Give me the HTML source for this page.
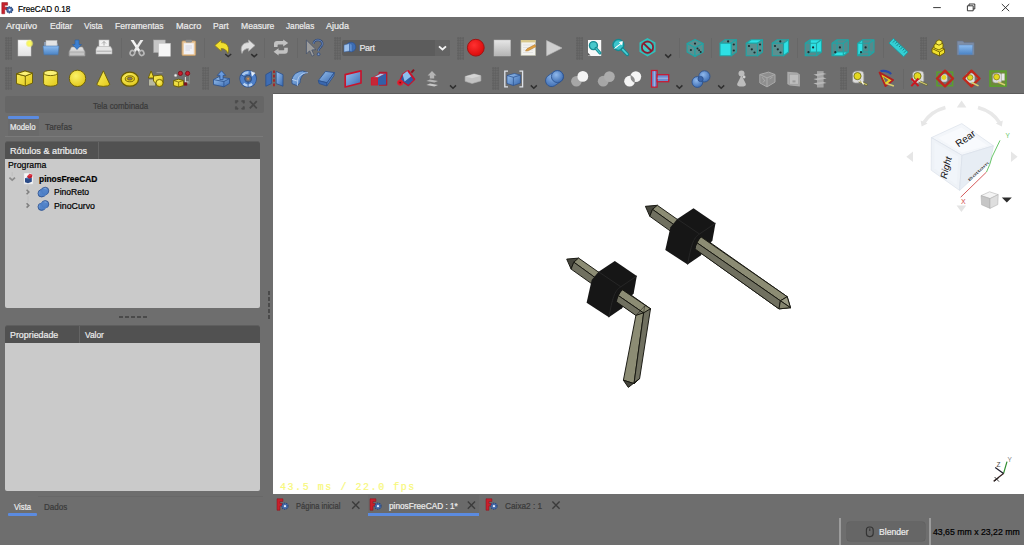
<!DOCTYPE html>
<html><head><meta charset="utf-8"><title>FreeCAD 0.18</title>
<style>
html,body{margin:0;padding:0}
body{width:1024px;height:545px;position:relative;overflow:hidden;background:#6e6e6e;font-family:"Liberation Sans",sans-serif;font-size:9px;color:#e6e6e6}
.a{position:absolute}
.t{position:absolute;white-space:nowrap;line-height:12px;z-index:5;transform-origin:0 0;-webkit-text-stroke:0.22px}
.lt{background:#cacaca}
.hd{background:#515151}
.sep{position:absolute;width:1px;height:20px;background:#676767}
.grip{position:absolute;width:7px;height:23px;background-image:radial-gradient(circle at 1.2px 1.2px,#606060 0.8px,rgba(96,96,96,0) 1.3px);background-size:2.5px 2.5px}
svg{position:absolute;left:0;top:0;overflow:visible}
</style></head><body>
<div class="a" style="left:0;top:0;width:1024px;height:17px;background:#fff"></div>
<div class="t" style="left:17.6px;top:2.6px;font-size:9.8px;transform:scaleX(0.836);color:#000">FreeCAD 0.18</div>
<div class="t" style="left:6.2px;top:20.1px;font-size:9.5px;transform:scaleX(0.966);color:#ececec">Arquivo</div>
<div class="t" style="left:49.6px;top:20.1px;font-size:9.5px;transform:scaleX(0.903);color:#ececec">Editar</div>
<div class="t" style="left:84.0px;top:20.1px;font-size:9.5px;transform:scaleX(0.883);color:#ececec">Vista</div>
<div class="t" style="left:114.8px;top:20.1px;font-size:9.5px;transform:scaleX(0.902);color:#ececec">Ferramentas</div>
<div class="t" style="left:175.6px;top:20.1px;font-size:9.5px;transform:scaleX(0.962);color:#ececec">Macro</div>
<div class="t" style="left:213.1px;top:20.1px;font-size:9.5px;transform:scaleX(0.901);color:#ececec">Part</div>
<div class="t" style="left:241.0px;top:20.1px;font-size:9.5px;transform:scaleX(0.901);color:#ececec">Measure</div>
<div class="t" style="left:286.0px;top:20.1px;font-size:9.5px;transform:scaleX(0.864);color:#ececec">Janelas</div>
<div class="t" style="left:326.0px;top:20.1px;font-size:9.5px;transform:scaleX(0.947);color:#ececec">Ajuda</div>
<div class="t" style="left:93.3px;top:99.8px;font-size:8.8px;transform:scaleX(0.896);color:#3a3a3a">Tela combinada</div>
<div class="t" style="left:9.6px;top:121.2px;font-size:8.8px;transform:scaleX(0.883);color:#ececec">Modelo</div>
<div class="t" style="left:44.8px;top:121.2px;font-size:8.8px;transform:scaleX(0.942);color:#3a3a3a">Tarefas</div>
<div class="t" style="left:9.9px;top:145.0px;font-size:9.5px;transform:scaleX(0.960);color:#ececec">Rótulos &amp; atributos</div>
<div class="t" style="left:7.8px;top:159.3px;font-size:9.5px;transform:scaleX(0.918);color:#000">Programa</div>
<div class="t" style="left:38.7px;top:173.0px;font-size:9.5px;transform:scaleX(0.884);color:#000;font-weight:bold">pinosFreeCAD</div>
<div class="t" style="left:54.4px;top:186.2px;font-size:9.5px;transform:scaleX(0.898);color:#000">PinoReto</div>
<div class="t" style="left:54.4px;top:199.6px;font-size:9.5px;transform:scaleX(0.924);color:#000">PinoCurvo</div>
<div class="t" style="left:9.8px;top:328.7px;font-size:9.5px;transform:scaleX(0.933);color:#ececec">Propriedade</div>
<div class="t" style="left:85.0px;top:328.7px;font-size:9.5px;transform:scaleX(0.880);color:#ececec">Valor</div>
<div class="t" style="left:14.0px;top:501.3px;font-size:8.8px;transform:scaleX(0.886);color:#ececec">Vista</div>
<div class="t" style="left:44.0px;top:501.3px;font-size:8.8px;transform:scaleX(0.916);color:#3a3a3a">Dados</div>
<div class="t" style="left:296.2px;top:500.2px;font-size:8.8px;transform:scaleX(0.856);color:#3a3a3a">Página inicial</div>
<div class="t" style="left:389.0px;top:500.2px;font-size:8.8px;transform:scaleX(0.938);color:#ececec">pinosFreeCAD : 1*</div>
<div class="t" style="left:505.0px;top:500.2px;font-size:8.8px;transform:scaleX(0.939);color:#3a3a3a">Caixa2 : 1</div>
<div class="t" style="left:878.9px;top:525.8px;font-size:9.5px;transform:scaleX(0.907);color:#ececec">Blender</div>
<div class="t" style="left:933.3px;top:525.7px;font-size:9.5px;transform:scaleX(0.917);color:#000">43,65 mm x 23,22 mm</div>
<!-- 3D view background -->
<div class="a" style="left:273px;top:94px;width:751px;height:400px;background:#fff"></div>
<div class="a" style="left:273px;top:93px;width:751px;height:1px;background:#5c5c5c"></div>
<!-- combo view dock title -->
<div class="a" style="left:5px;top:96px;width:259px;height:17px;background:#666666;border-radius:2px"></div>
<!-- tab bar top -->
<div class="a" style="left:5px;top:136px;width:258px;height:1px;background:#7a7a7a"></div>
<div class="a" style="left:8px;top:116px;width:31px;height:3px;background:#5b8be0;border-radius:1px"></div>
<div class="a" style="left:8px;top:119px;width:31px;height:17px;background:#6a6a6a"></div>
<!-- tree -->
<div class="a hd" style="left:5px;top:141px;width:255px;height:18px;border-radius:3px 3px 0 0;border-top:1px solid #5e5e5e;box-sizing:border-box"></div>
<div class="a" style="left:98px;top:142px;width:1px;height:17px;background:#646464"></div>
<div class="a lt" style="left:5px;top:159px;width:255px;height:149px;border-radius:0 0 2px 2px"></div>
<!-- splitter handles -->
<div class="a" style="left:119px;top:316px;width:29px;height:2px;background:repeating-linear-gradient(90deg,#4a4a4a 0 4px,rgba(0,0,0,0) 4px 6px)"></div>
<div class="a" style="left:268px;top:291px;width:2px;height:29px;background:repeating-linear-gradient(180deg,#4a4a4a 0 4px,rgba(0,0,0,0) 4px 6px)"></div>
<!-- property -->
<div class="a hd" style="left:5px;top:325px;width:255px;height:18px;border-radius:3px 3px 0 0;border-top:1px solid #5e5e5e;box-sizing:border-box"></div>
<div class="a" style="left:79px;top:326px;width:1px;height:17px;background:#646464"></div>
<div class="a lt" style="left:5px;top:343px;width:255px;height:148px;border-radius:0 0 2px 2px"></div>
<div class="a" style="left:8px;top:513px;width:29px;height:3px;background:#5b8be0;border-radius:1px"></div>
<div class="a" style="left:38px;top:496px;width:225px;height:1px;background:#686868"></div>
<!-- mdi tabs -->
<div class="a" style="left:368px;top:495px;width:111px;height:18px;background:#6a6a6a"></div>
<div class="a" style="left:368px;top:513px;width:111px;height:3px;background:#5b8be0"></div>
<!-- status bar -->
<div class="a" style="left:839px;top:518px;width:2px;height:27px;background:#9c9c9c"></div>
<div class="a" style="left:929px;top:518px;width:2px;height:27px;background:#9c9c9c"></div>
<div class="a" style="left:847px;top:522px;width:78px;height:19px;background:#666;border-radius:3px;box-shadow:0 0 0 0.5px #5e5e5e"></div>
<div class="t" style="left:280px;top:481.5px;color:#f8f87c;font-family:'Liberation Mono',monospace;font-size:10px;letter-spacing:1.55px">43.5 ms / 22.0 fps</div>
<!-- toolbar 1 -->
<div class="grip" style="left:5px;top:37px"></div>
<div class="sep" style="left:121px;top:38px"></div>
<div class="sep" style="left:204px;top:38px"></div>
<div class="sep" style="left:264px;top:38px"></div>
<div class="sep" style="left:297px;top:38px"></div>
<div class="grip" style="left:334px;top:37px"></div>
<div class="grip" style="left:457px;top:37px"></div>
<div class="grip" style="left:576px;top:37px"></div>
<div class="sep" style="left:679px;top:38px"></div>
<div class="sep" style="left:711px;top:38px"></div>
<div class="sep" style="left:797px;top:38px"></div>
<div class="sep" style="left:883px;top:38px"></div>
<div class="grip" style="left:920px;top:37px"></div>
<!-- workbench combobox -->
<div class="a" style="left:342px;top:40px;width:108px;height:16px;background:#5c5c5c;border-radius:2px"></div>
<div class="a" style="left:435px;top:40px;width:15px;height:16px;background:#636363;border-radius:0 2px 2px 0"></div>
<div class="t" style="left:359.4px;top:42.2px;font-size:9px;letter-spacing:-0.3px">Part</div>
<svg width="1024" height="66" viewBox="0 0 1024 66">
<defs>
<linearGradient id="gPage" x1="0" y1="0" x2="0" y2="1"><stop offset="0" stop-color="#fdfdfd"/><stop offset="1" stop-color="#e2e2e2"/></linearGradient>
<linearGradient id="gBlue" x1="0" y1="0" x2="0" y2="1"><stop offset="0" stop-color="#8dbcf0"/><stop offset="1" stop-color="#4a83c4"/></linearGradient>
<linearGradient id="gGray" x1="0" y1="0" x2="0" y2="1"><stop offset="0" stop-color="#e6e6e6"/><stop offset="1" stop-color="#b4b4b4"/></linearGradient>
<radialGradient id="gGlow"><stop offset="0" stop-color="#ffff50"/><stop offset="0.6" stop-color="#f4f060" stop-opacity="0.9"/><stop offset="1" stop-color="#f0f060" stop-opacity="0"/></radialGradient>
<radialGradient id="gRed" cx="0.4" cy="0.35" r="0.7"><stop offset="0" stop-color="#ff3030"/><stop offset="1" stop-color="#d80808"/></radialGradient>
<linearGradient id="gCube" x1="0" y1="0" x2="1" y2="1"><stop offset="0" stop-color="#8ab4e8"/><stop offset="1" stop-color="#3a6cb0"/></linearGradient>
</defs>
<!-- new -->
<g transform="translate(17,39)"><rect x="1" y="1" width="13" height="16" fill="url(#gPage)" stroke="#c8c8c8" stroke-width="0.5"/><circle cx="12.5" cy="4.5" r="4.2" fill="url(#gGlow)"/></g>
<!-- open -->
<g transform="translate(42,39)"><path d="M2,3 L7,3 L8,4.5 L16,4.5 L16,15 L2,15 Z" fill="#8a9ab0"/><rect x="4" y="1.5" width="11" height="7" fill="#e4e4e4" stroke="#bdbdbd" stroke-width="0.5"/><path d="M1,7 L17,7 L16,15.8 L2,15.8 Z" fill="url(#gBlue)" stroke="#4a78b0" stroke-width="0.6"/></g>
<!-- save -->
<g transform="translate(68,39)"><path d="M3.5,8 L14.5,8 L17,13 L17,17 L1,17 L1,13 Z" fill="url(#gGray)" stroke="#9a9a9a" stroke-width="0.6"/><rect x="1.3" y="13" width="15.4" height="3.8" fill="#c4c4c4" stroke="#8e8e8e" stroke-width="0.5"/><path d="M7,1 L11,1 L11,5.5 L13.5,5.5 L9,10.5 L4.5,5.5 L7,5.5 Z" fill="#3c7fd0" stroke="#2a5ea0" stroke-width="0.6"/></g>
<!-- print -->
<g transform="translate(95,39)"><rect x="4" y="1" width="10" height="8" fill="#f2f2f2" stroke="#b8b8b8" stroke-width="0.6"/><path d="M7,4.5 L9,2.5 L11,4.5 M9,2.5 L9,6.5" stroke="#9a9a9a" stroke-width="0.8" fill="none"/><path d="M2.5,7.5 L15.5,7.5 L17,10 L17,15 L1,15 L1,10 Z" fill="#e6e6e6" stroke="#b0b0b0" stroke-width="0.6"/><rect x="1.5" y="11.5" width="15" height="1.6" fill="#bcbcbc"/></g>
<!-- cut -->
<g transform="translate(128,39)"><path d="M2.6,1 L5.6,1 L12.4,11.6 L10.4,13 Z" fill="#f6f6f6"/><path d="M15.4,1 L12.4,1 L5.6,11.6 L7.6,13 Z" fill="#ececec"/><ellipse cx="4.4" cy="14" rx="2.3" ry="2.5" fill="none" stroke="#b8b8b8" stroke-width="1.7" transform="rotate(25 4.4 14)"/><ellipse cx="13.6" cy="14" rx="2.3" ry="2.5" fill="none" stroke="#b8b8b8" stroke-width="1.7" transform="rotate(-25 13.6 14)"/></g>
<!-- copy -->
<g transform="translate(153,39)"><rect x="0.7" y="1" width="11.5" height="12.5" fill="#c6c6c6" stroke="#aaa" stroke-width="0.5"/><rect x="5.7" y="4.3" width="11.8" height="13" fill="#f6f6f6" stroke="#c4c4c4" stroke-width="0.5"/></g>
<!-- paste -->
<g transform="translate(181,39)"><rect x="1" y="2" width="13.6" height="14.4" rx="1" fill="#e8c79c" stroke="#c79a62" stroke-width="0.8"/><rect x="2.8" y="4.2" width="10" height="11" fill="#f1f1f5"/><rect x="4.6" y="0.8" width="6.4" height="2.6" rx="0.8" fill="#8a8a8a"/><path d="M4.5,7 H11 M4.5,9 H11 M4.5,11 H9" stroke="#c8c8d8" stroke-width="0.7"/></g>
<!-- undo -->
<g transform="translate(214,39)"><path d="M0.8,6.4 L7.2,1 L7.2,3.6 C13.4,3.6 16,8.4 13.8,14.4 C12.6,11 10.6,9.6 7.2,9.6 L7.2,12.2 Z" fill="#f2e02e" stroke="#8c7c12" stroke-width="0.8" stroke-linejoin="round"/><path d="M11.2,15 L14.2,17.5 L17.2,15" fill="none" stroke="#2e2e2e" stroke-width="1.5"/></g>
<!-- redo -->
<g transform="translate(241,39)"><path d="M14,6.4 L7.6,1 L7.6,3.6 C1.4,3.6 -1.2,8.4 1,14.4 C2.2,11 4.2,9.6 7.6,9.6 L7.6,12.2 Z" fill="#dedede" stroke="#ababab" stroke-width="0.8" stroke-linejoin="round"/><path d="M10.2,15.2 L13.2,17.7 L16.2,15.2" fill="none" stroke="#2e2e2e" stroke-width="1.5"/></g>
<!-- refresh -->
<g transform="translate(272.6,39.4)" fill="#c2c2c2"><path d="M1.4,7.6 L1.4,4.6 Q1.4,1.6 4.4,1.6 L10.6,1.6 L10.6,0 L15.6,3.6 L10.6,7.2 L10.6,5.2 L5.6,5.2 Q5,5.2 5,6 L5,7.6 Z"/><path d="M15.2,8.4 L15.2,11.4 Q15.2,14.4 12.2,14.4 L6,14.4 L6,16 L1,12.4 L6,8.8 L6,10.8 L11,10.8 Q11.6,10.8 11.6,10 L11.6,8.4 Z"/></g>
<!-- whats this -->
<g transform="translate(305,39)"><path d="M1.4,1 L1.4,15 L4.6,11.8 L7,17.2 L9.2,16.2 L6.8,11 L11,10.6 Z" fill="#9c9c9c" stroke="#48546c" stroke-width="0.8" stroke-linejoin="round"/><path d="M8.6,4.6 C8.8,1.4 11.8,0.6 14.2,1.2 C17.6,2 18.2,5.4 16.2,7.4 C14.6,9 13.6,9.6 13.6,11.8" fill="none" stroke="#2f4878" stroke-width="2.3"/><path d="M8.6,4.6 C8.8,1.4 11.8,0.6 14.2,1.2 C17.6,2 18.2,5.4 16.2,7.4 C14.6,9 13.6,9.6 13.6,11.8" fill="none" stroke="#7896c4" stroke-width="0.9"/><circle cx="13.6" cy="15.2" r="1.4" fill="#7896c4" stroke="#2f4878" stroke-width="0.8"/></g>
<!-- combobox icon + arrow -->
<g transform="translate(343,42)"><circle cx="8" cy="5" r="4.8" fill="#3d6db4" stroke="#2d4f88" stroke-width="0.6"/><path d="M1,3 L6.5,1.5 L6.5,9 L1,10 Z" fill="#9cc0ec" stroke="#3a62a0" stroke-width="0.5"/><path d="M6.5,1.5 L9,2.4 L9,9.6 L6.5,9 Z" fill="#5e8fd0" stroke="#3a62a0" stroke-width="0.5"/></g>
<path d="M439,46.3 L442.5,49.5 L446,46.3" fill="none" stroke="#f4f4f4" stroke-width="1.8"/>
<!-- macro record / stop / edit / run -->
<circle cx="475.8" cy="47.7" r="8.4" fill="url(#gRed)" stroke="#a01414" stroke-width="1"/>
<rect x="494" y="40" width="16.6" height="16" fill="url(#gGray)" stroke="#b8b8b8" stroke-width="0.5"/>
<g transform="translate(520,39)"><rect x="1" y="1.5" width="14.5" height="15" fill="#f3f3ef" stroke="#b9b9a8" stroke-width="0.7"/><rect x="1" y="1" width="14.5" height="2.4" fill="#d9c98c"/><path d="M3,6 H13 M3,8.5 H13 M3,11 H13 M3,13.5 H13" stroke="#d6d6d6" stroke-width="0.6"/><path d="M5.5,12 L7,9.8 L14.8,5.6 L16,7.6 L8.2,11.8 Z" fill="#e0a040" stroke="#a8702a" stroke-width="0.5"/></g>
<path d="M546.6,40.6 L562,48 L546.6,55.8 Z" fill="#cfcfcf" stroke="#bcbcbc" stroke-width="0.6"/>
<!-- fit all -->
<g transform="translate(587,39)"><rect x="1" y="1" width="13.2" height="16" fill="#f8f8f8"/><circle cx="6.4" cy="6.6" r="4" fill="#48c8cc" stroke="#188c94" stroke-width="1.4"/><path d="M9,9.4 L13,14" stroke="#188c94" stroke-width="3" stroke-linecap="round"/><path d="M9.2,9.6 L12.8,13.8" stroke="#48c8cc" stroke-width="1.2" stroke-linecap="round"/><path d="M0.8,13.6 L3.6,16.6 L0.8,16.6Z" fill="#555"/></g>
<!-- fit selection -->
<g transform="translate(611,38)"><circle cx="7.4" cy="7" r="5.4" fill="#3cc4cc" stroke="#148a92" stroke-width="1.5"/><path d="M11.4,11.2 L16.4,16.4" stroke="#148a92" stroke-width="3.6" stroke-linecap="round"/><path d="M11.8,11.6 L16.2,16.2" stroke="#4cd0d6" stroke-width="1.6" stroke-linecap="round"/><path d="M3.6,10.4 L9.6,5.6 L8.4,4.4 L11.4,3.6 L10.8,6.8 L9.8,5.9 Z" fill="#fff" stroke="#fff" stroke-width="0.8"/></g>
<!-- draw style -->
<g transform="translate(639,38)"><path d="M8.5,0.8 L15.8,5 L15.8,13.4 L8.5,17.6 L1.2,13.4 L1.2,5 Z" fill="#5a8c8c" stroke="#2cc4c0" stroke-width="1.4"/><circle cx="8.5" cy="9.2" r="5.6" fill="#46c8c4" stroke="#8a1c30" stroke-width="1.7"/><path d="M4.6,5.4 L12.4,13" stroke="#8a1c30" stroke-width="2"/></g>
<path d="M665.2,54.4 L668.2,57.4 L671.2,54.4" fill="none" stroke="#2e2e2e" stroke-width="1.5"/>
<!-- view cubes -->
<g transform="translate(686.5,39)" stroke="#1fa5a5" stroke-width="1.1" stroke-linejoin="round"><polygon points="8.5,0.6 16.6,4.6 8.5,8.8 0.6,4.6" fill="#5c9090"/><polygon points="0.6,4.6 8.5,8.8 8.5,17.4 0.6,13" fill="#5c9090"/><polygon points="16.6,4.6 8.5,8.8 8.5,17.4 16.6,13" fill="#5c9090"/><g fill="#1c2c30" stroke="none"><circle cx="8.5" cy="4.6" r="1.1"/><circle cx="4.4" cy="11" r="1.1"/><circle cx="11" cy="9.5" r="1"/><circle cx="14.2" cy="13" r="1"/><circle cx="12.6" cy="11.2" r="1"/></g></g>
<g transform="translate(719.3,39)" stroke="#1fa5a5" stroke-width="1.1" stroke-linejoin="round"><polygon points="0.7,4.2 12,4.2 17,0.7 5.7,0.7" fill="#5c9090"/><polygon points="0.7,4.2 12,4.2 12,16.8 0.7,16.8" fill="#2ee0e4"/><polygon points="12,4.2 17,0.7 17,13 12,16.8" fill="#5c9090"/><circle cx="8.8" cy="2.4" r="1.1" fill="#1c2c30" stroke="none"/><circle cx="14.5" cy="5.5" r="1.1" fill="#1c2c30" stroke="none"/><circle cx="14.5" cy="11.5" r="1.1" fill="#1c2c30" stroke="none"/></g>
<g transform="translate(745.5,39)" stroke="#1fa5a5" stroke-width="1.1" stroke-linejoin="round"><polygon points="0.7,4.2 12,4.2 17,0.7 5.7,0.7" fill="#2ee0e4"/><polygon points="0.7,4.2 12,4.2 12,16.8 0.7,16.8" fill="#5c9090"/><polygon points="12,4.2 17,0.7 17,13 12,16.8" fill="#5c9090"/><circle cx="3.5" cy="7" r="1.1" fill="#1c2c30" stroke="none"/><circle cx="9" cy="13.5" r="1.1" fill="#1c2c30" stroke="none"/><circle cx="6.3" cy="10.3" r="1.1" fill="#1c2c30" stroke="none"/><circle cx="14.5" cy="5.5" r="1.1" fill="#1c2c30" stroke="none"/><circle cx="14.5" cy="11.5" r="1.1" fill="#1c2c30" stroke="none"/></g>
<g transform="translate(771.5,39)" stroke="#1fa5a5" stroke-width="1.1" stroke-linejoin="round"><polygon points="0.7,4.2 12,4.2 17,0.7 5.7,0.7" fill="#5c9090"/><polygon points="0.7,4.2 12,4.2 12,16.8 0.7,16.8" fill="#5c9090"/><polygon points="12,4.2 17,0.7 17,13 12,16.8" fill="#2ee0e4"/><circle cx="3.5" cy="7" r="1.1" fill="#1c2c30" stroke="none"/><circle cx="9" cy="13.5" r="1.1" fill="#1c2c30" stroke="none"/><circle cx="6.3" cy="10.3" r="1.1" fill="#1c2c30" stroke="none"/><circle cx="8.8" cy="2.4" r="1.1" fill="#1c2c30" stroke="none"/></g>
<g transform="translate(804.5,39)" stroke-linejoin="round"><polygon points="0.7,4.2 5.7,0.7 17,0.7 17,13 12,16.8 0.7,16.8" fill="#568a8c"/><polygon points="5.7,0.7 17,0.7 17,13 5.7,13" fill="#2ee0e4"/><path d="M0.7,4.2 H12 V16.8 H0.7 Z M0.7,4.2 L5.7,0.7 H17 L12,4.2 M17,0.7 V13 L12,16.8 M5.7,0.7 V13 H17 M5.7,13 L0.7,16.8" fill="none" stroke="#1fa5a5" stroke-width="1.1"/><circle cx="4" cy="13.2" r="1.1" fill="#1c2c30"/><circle cx="8.6" cy="8.4" r="1.1" fill="#1c2c30"/></g>
<g transform="translate(831.3,39)" stroke-linejoin="round"><polygon points="0.7,4.2 5.7,0.7 17,0.7 17,13 12,16.8 0.7,16.8" fill="#568a8c"/><polygon points="0.7,16.8 12,16.8 17,13 5.7,13" fill="#2ee0e4"/><path d="M0.7,4.2 H12 V16.8 H0.7 Z M0.7,4.2 L5.7,0.7 H17 L12,4.2 M17,0.7 V13 L12,16.8 M5.7,0.7 V13 H17 M5.7,13 L0.7,16.8" fill="none" stroke="#1fa5a5" stroke-width="1.1"/><circle cx="4" cy="13.2" r="1.1" fill="#1c2c30"/><circle cx="8.6" cy="8.4" r="1.1" fill="#1c2c30"/></g>
<g transform="translate(857,39)" stroke-linejoin="round"><polygon points="0.7,4.2 5.7,0.7 17,0.7 17,13 12,16.8 0.7,16.8" fill="#568a8c"/><polygon points="0.7,4.2 5.7,0.7 5.7,13 0.7,16.8" fill="#2ee0e4"/><path d="M0.7,4.2 H12 V16.8 H0.7 Z M0.7,4.2 L5.7,0.7 H17 L12,4.2 M17,0.7 V13 L12,16.8 M5.7,0.7 V13 H17 M5.7,13 L0.7,16.8" fill="none" stroke="#1fa5a5" stroke-width="1.1"/><circle cx="4" cy="13.2" r="1.1" fill="#1c2c30"/><circle cx="8.6" cy="8.4" r="1.1" fill="#1c2c30"/></g>
<g transform="translate(898.5,47.6) rotate(43)"><rect x="-10" y="-3.2" width="20" height="6.4" fill="#34cfd4" stroke="#179aa0" stroke-width="0.8"/><path d="M-7.5,-3 V0 M-5,-3 V-0.8 M-2.5,-3 V0 M0,-3 V-0.8 M2.5,-3 V0 M5,-3 V-0.8 M7.5,-3 V0" stroke="#127a80" stroke-width="0.8"/></g>
<g transform="translate(931,39)" stroke="#6e6000" stroke-width="0.9" stroke-linejoin="round" fill="#f0e02c"><path d="M1,9.5 L5,6 L13.5,10 L13.5,14 L8.5,17 L1,13.5 Z"/><path d="M3,6 L7.5,2.5 L12,4.8 L12,8.5 L8,11 L3,8.8 Z" fill="#f4e83c"/><path d="M5,2.6 L8,0.8 L11,2.2 L11,4.6 L8,6.2 L5,4.8 Z" fill="#f8ee50"/><path d="M1,9.5 L8.5,13 L13.5,10 M8.5,13 V17" fill="none"/></g>
<g transform="translate(956.5,39)"><path d="M0.6,2 L6.4,2 L7.6,3.6 L17.6,3.6 L17.6,16 L0.6,16 Z" fill="#7f8ea6" stroke="#66748c" stroke-width="0.6"/><path d="M2.2,6 L16.2,6 L15.8,15.6 L2.4,15.6 Z" fill="url(#gBlue)" stroke="#5a82b4" stroke-width="0.5"/></g>
</svg>
<!-- toolbar 2 -->
<div class="grip" style="left:5px;top:67px"></div>
<div class="grip" style="left:202px;top:67px"></div>
<div class="grip" style="left:492px;top:67px"></div>
<div class="grip" style="left:840px;top:67px"></div>
<div class="sep" style="left:903px;top:69px"></div>
<svg width="1024" height="96" viewBox="0 0 1024 96">
<defs>
<linearGradient id="yG" x1="0" y1="0" x2="1" y2="1"><stop offset="0" stop-color="#fbf060"/><stop offset="1" stop-color="#e2c818"/></linearGradient>
<radialGradient id="yR" cx="0.4" cy="0.35" r="0.75"><stop offset="0" stop-color="#fbf268"/><stop offset="1" stop-color="#e0c414"/></radialGradient>
<linearGradient id="bG" x1="0" y1="0" x2="1" y2="1"><stop offset="0" stop-color="#9cc4f0"/><stop offset="1" stop-color="#3768b0"/></linearGradient>
<radialGradient id="bR" cx="0.4" cy="0.35" r="0.75"><stop offset="0" stop-color="#8fb8ec"/><stop offset="1" stop-color="#3565ac"/></radialGradient>
</defs>
<g stroke="#6a5c00" stroke-width="0.9" stroke-linejoin="round">
<!-- box -->
<g transform="translate(15.5,70)"><polygon points="1,3.8 9.5,1 17,3.2 17,13 9.8,16 1,13.6" fill="url(#yG)"/><path d="M1,3.8 L9.8,6 L17,3.2 M9.8,6 V16" fill="none"/><polygon points="1,3.8 9.5,1 17,3.2 9.8,6" fill="#fbf276"/></g>
<!-- cylinder -->
<g transform="translate(43,70)"><path d="M0.6,3 V13.6 A7,2.6 0 0 0 14.6,13.6 V3" fill="url(#yG)"/><ellipse cx="7.6" cy="3" rx="7" ry="2.6" fill="#fbf276"/></g>
<!-- sphere -->
<circle cx="77.5" cy="78.4" r="8.2" fill="url(#yR)"/>
<!-- cone -->
<g transform="translate(96,70)"><path d="M7.4,0.8 L13.8,14.4 A6.6,2.4 0 0 1 0.8,14.4 Z" fill="url(#yG)"/></g>
<!-- torus -->
<g transform="translate(120.5,71)"><ellipse cx="9.3" cy="8.2" rx="8.7" ry="7" fill="url(#yR)" stroke-width="1.3"/><ellipse cx="9.3" cy="7.8" rx="4.6" ry="3" fill="#e8d020" stroke-width="0.9"/><ellipse cx="9.3" cy="7.6" rx="2.6" ry="1.5" fill="#8a7868" stroke-width="0.7"/></g>
<!-- primitives -->
<g transform="translate(147.5,70)"><rect x="1" y="9" width="7" height="7" fill="#b8b8a0" stroke="#666"/><polygon points="3.6,1 6.6,8 0.8,8" fill="url(#yG)"/><polygon points="6,6 14,5 15.6,7 15.6,13 9,14 6,11" fill="url(#yG)"/><circle cx="12" cy="13" r="3.6" fill="url(#yR)"/><path d="M9,2.6 H15" stroke="#999" fill="none"/></g>
<!-- shape builder -->
<g transform="translate(173,70)"><path d="M10,2 H16.4 V13.6 H12" fill="none" stroke="#8a9a8a" stroke-width="0.7"/><path d="M12.4,7 V12 H15.6" fill="none" stroke="#e0e0e0" stroke-width="1"/><polygon points="0.6,10.6 5.6,9.2 10.6,10.6 10.6,15.6 5.6,17 0.6,15.6" fill="url(#yG)"/><path d="M0.6,10.6 L5.6,12 L10.6,10.6 M5.6,12 V17" fill="none" stroke-width="0.7"/><circle cx="7.4" cy="3.4" r="2.1" fill="#c81c2c" stroke="#7c1018"/><circle cx="14.6" cy="3.4" r="2.1" fill="#c81c2c" stroke="#7c1018"/><circle cx="2.6" cy="5.4" r="1.2" fill="#f4f4f4" stroke="#ccc" stroke-width="0.4"/><rect x="11" y="12.4" width="3.2" height="3.2" fill="#7c1420" stroke="none"/></g>
</g>
<g stroke="#2a4f8c" stroke-width="0.8" stroke-linejoin="round">
<!-- extrude -->
<g transform="translate(212.5,70)"><polygon points="1,9.6 6,7 17,8.6 17,13.4 11.4,16.8 1,14.6" fill="url(#bG)"/><path d="M1,9.6 L11.4,11.6 L17,8.6 M11.4,11.6 V16.8" fill="none"/><path d="M9,0.8 L13.2,5.4 L10.6,5.4 L10.6,9.6 L7.4,9.6 L7.4,5.4 L4.8,5.4 Z" fill="#6a9ce0"/></g>
<!-- revolve -->
<g transform="translate(239.5,70)"><circle cx="8.6" cy="8.8" r="5.9" fill="none" stroke="#2a4f8c" stroke-width="5.6"/><circle cx="8.6" cy="8.8" r="5.9" fill="none" stroke="#4f80c8" stroke-width="4.2"/><path d="M3.2,5 A6.2,6.2 0 0 1 9,2.6" fill="none" stroke="#a8c8f0" stroke-width="2.6"/><path d="M4,13.6 A6.4,6.4 0 0 0 12.6,14" fill="none" stroke="#b8d2f2" stroke-width="2.4"/><path d="M8.6,8.8 L1.4,4.6 M8.6,8.8 L8.6,17 M8.6,8.8 L12,1.6" fill="none" stroke="#2a4f8c" stroke-width="0.8"/><circle cx="8.6" cy="8.8" r="3" fill="#747474" stroke="#2a4f8c" stroke-width="0.6"/><circle cx="8.6" cy="8.8" r="1" fill="#d88a4a" stroke="none"/><path d="M11.6,1.4 L15.6,3 L12.6,6.2 Z" fill="#e8f0fa" stroke="#e8f0fa" stroke-width="0.4"/></g>
<!-- mirror -->
<g transform="translate(265,70)"><polygon points="0.8,4.6 6.4,1.4 6.4,13.6 0.8,16.2" fill="#3e6db4"/><polygon points="11.2,1.4 18,4.6 18,16.2 11.2,13.6" fill="url(#bG)"/><path d="M9,0.4 V17.4" stroke="#b01818" stroke-width="1.6" stroke-dasharray="2.6 1.8" fill="none"/></g>
<!-- fillet -->
<g transform="translate(291,70)"><path d="M1,9.4 C2,4.6 6,1.6 11.6,1 L17,2.6 C11.8,3.6 9.4,7 9,12.6 L6.4,15.8 L1,13.6 Z" fill="url(#bG)"/><path d="M1,9.4 L6.6,11.2 C7,6 10.4,3.2 17,2.6 M6.6,11.2 L6.4,15.8" fill="none" stroke="#cfe0f6" stroke-width="0.7"/></g>
<!-- chamfer -->
<g transform="translate(317.5,70)"><polygon points="0.8,10.6 8,1.4 16.8,2.6 9.6,12.8" fill="url(#bG)"/><polygon points="0.8,10.6 9.6,12.8 9.2,16 1.6,13.6" fill="#3a68b0"/><polygon points="9.6,12.8 16.8,2.6 16.4,5.8 9.2,16" fill="#5685c8"/></g>
</g>
<!-- face builder -->
<g transform="translate(344,70)"><polygon points="1.2,4.6 17,0.8 17,13 1.2,17" fill="url(#bG)" stroke="#c8142c" stroke-width="1.7" stroke-linejoin="round"/></g>
<!-- loft -->
<g stroke-linejoin="round"><polygon points="379.4,72.6 386.6,72.6 386.6,85 379.4,85" fill="#2f5aa0" stroke="#b01c30" stroke-width="1.5"/><polygon points="372,78 377.4,78 386,73.4 380.4,73.4" fill="#a4ccf0" stroke="#c8142c" stroke-width="0.7"/><polygon points="377.4,78 386,73.4 386,84.4 377.4,85" fill="#3360a8"/><rect x="371.4" y="77.8" width="6" height="7.2" fill="#c42838" stroke="#d01c30" stroke-width="1.1"/></g>
<!-- sweep -->
<g stroke-linejoin="round"><polygon points="402.6,74.4 408,70.6 414.6,79.6 408.4,85.6 400,80" fill="#2f5aa0" stroke="#c8142c" stroke-width="1.3"/><polygon points="402.6,74.4 408,70.6 411.6,76 404.6,81.6" fill="#8cc0ee"/><path d="M408,70.6 L414.6,79.6" stroke="#c8142c" stroke-width="1.8" fill="none"/><circle cx="400.2" cy="82.6" r="2.7" fill="#d81828" stroke="#e02434" stroke-width="0.9"/><circle cx="400.2" cy="82.6" r="0.9" fill="#7c0c14"/><path d="M411.4,72.6 L414,69.6" stroke="#8c1420" stroke-width="2" fill="none"/></g>
<!-- offset (disabled) -->
<g transform="translate(426,70.5)" fill="#b4b4b4"><path d="M6,0.6 L10.4,5 L8.2,5 L8.2,8 L3.8,8 L3.8,5 L1.6,5 Z"/><polygon points="0.4,10.4 4,9 12,10.4 8.4,12"/><polygon points="0.4,14.4 4,13 12,14.4 8.4,16" fill="#c8c8c8"/></g>
<path d="M450,85.4 L453,88.2 L456,85.4" fill="none" stroke="#2e2e2e" stroke-width="1.5"/>
<!-- thickness (disabled) -->
<g transform="translate(464.5,73.5)"><polygon points="0.6,3 9.6,0.4 16.4,2.2 16.4,7.4 7.6,10 0.6,7.8" fill="#c2c2c2" stroke="#adadad" stroke-width="0.6"/><polygon points="0.6,3 9.6,0.4 16.4,2.2 7.6,4.8" fill="#d4d4d4"/></g>
<!-- compound -->
<g transform="translate(504,70.5)"><path d="M4,0.6 H0.8 V16.4 H4 M15.4,0.6 H18.6 V16.4 H15.4" fill="none" stroke="#dfe3ea" stroke-width="1.3"/><polygon points="3,5 10.4,3 16.4,4.6 16.4,12.6 9.4,15 3,13" fill="url(#bG)" stroke="#2a4f8c" stroke-width="0.7"/><path d="M3,5 L9.4,6.8 L16.4,4.6 M9.4,6.8 V15" fill="none" stroke="#2a4f8c" stroke-width="0.7"/></g>
<path d="M530.8,85.4 L533.8,88.2 L536.8,85.4" fill="none" stroke="#2e2e2e" stroke-width="1.5"/>
<!-- boolean -->
<g stroke="#2a4f8c" stroke-width="0.8"><path d="M547.6,76.1 L554,71.6 A6,6 0 0 1 560.8,81.5 L554.4,85.9 A6,6 0 0 1 547.6,76.1 Z" fill="url(#bR)"/><circle cx="557.4" cy="76.6" r="6" fill="url(#bR)"/></g>
<!-- cut -->
<circle cx="576.4" cy="81.2" r="5.3" fill="#a6a6a6"/><circle cx="582.8" cy="76.4" r="5.4" fill="#f4f4f4"/>
<!-- fuse -->
<circle cx="603.2" cy="81.2" r="5.4" fill="#a6a6a6"/><circle cx="609.4" cy="76.6" r="5.4" fill="#acacac"/>
<!-- common -->
<circle cx="629.6" cy="81.2" r="5.4" fill="#f4f4f4"/><circle cx="635.8" cy="76.6" r="5.4" fill="#f4f4f4"/><path d="M631.4,76.4 A5.4,5.4 0 0 1 634,81.6 A5.4,5.4 0 0 1 631.4,76.4 Z" fill="#8c8c8c" stroke="#8c8c8c" stroke-width="1.6"/>
<!-- join -->
<g transform="translate(650.5,69.5)" stroke="#c81c34" stroke-width="1.3"><rect x="1" y="1" width="5.6" height="16.6" fill="#6c8ed0"/><rect x="6.6" y="5.2" width="11.6" height="7" fill="#6c8ed0"/><path d="M3.8,1.6 V17 M7,8.7 H17.6" stroke="#a8b8e4" stroke-width="1" fill="none"/></g>
<path d="M676.4,85.4 L679.4,88.2 L682.4,85.4" fill="none" stroke="#2e2e2e" stroke-width="1.5"/>
<!-- split -->
<g stroke="#2a4f8c" stroke-width="0.8"><circle cx="697.4" cy="82" r="5.4" fill="url(#bR)"/><circle cx="704.4" cy="76.4" r="5.6" fill="url(#bR)"/><circle cx="700.6" cy="79" r="2.6" fill="#3a66ac"/></g>
<path d="M718.2,85.4 L721.2,88.2 L724.2,85.4" fill="none" stroke="#2e2e2e" stroke-width="1.5"/>
<!-- check geometry (disabled) -->
<g transform="translate(735.5,70)" fill="#bcbcbc"><circle cx="6" cy="3.4" r="3"/><path d="M6,5 L10.4,14 Q10.6,16.6 6,16.6 Q1.4,16.6 1.6,14 Z"/><circle cx="8.6" cy="7" r="1.4" fill="#d0d0d0"/></g>
<!-- gray wire box -->
<g transform="translate(759,71.5)" fill="none" stroke="#aaaaaa" stroke-width="1"><polygon points="0.8,3 9.6,0.6 16,3 16,10.6 8,15.4 0.8,11.4" fill="#8e8e8e"/><path d="M0.8,3 L8,6.4 L16,3 M8,6.4 V15.4 M3,5.6 L6,9.6 M10.6,7.4 L13.6,5.6 M4,11 L6,8.6" /></g>
<!-- gray square -->
<g transform="translate(786.5,71)"><polygon points="0.8,0.8 10.6,1.6 13.4,3.4 13.4,15.6 3.4,14.6 0.8,13" fill="#aaaaaa"/><rect x="3" y="3.2" width="9" height="10" fill="#bdbdbd" stroke="#999" stroke-width="0.6"/><rect x="6" y="9.4" width="3" height="2" fill="#9a9a9a"/></g>
<!-- cross sections -->
<g transform="translate(813,70.5)" fill="#b8b8b8"><rect x="4" y="0.6" width="6.6" height="16.4" fill="#a4a4a4"/><polygon points="0.4,4 10,2.4 13.6,3.6 4,5.4"/><polygon points="0.4,8.4 10,6.8 13.6,8 4,9.8"/><polygon points="0.4,12.8 10,11.2 13.6,12.4 4,14.2"/></g>
<!-- measure tools -->
<g id="tape1" transform="translate(850.5,69.5)"><path d="M2,5 Q2,1.4 7,1.4 H10.4 Q13.4,1.4 13.4,5 V11 Q13.4,13.6 10.4,13.6 H5 Q2,13.6 2,11 Z" fill="#dcdcdc" stroke="#8a8a8a" stroke-width="0.8"/><circle cx="7" cy="6.6" r="3.6" fill="#e4d820" stroke="#6a6a10" stroke-width="0.8"/><path d="M8,12.6 L16.4,16.2 L17,14.6 L10,11.4" fill="#d8d070" stroke="#5a5a3a" stroke-width="0.7"/><path d="M11,11 L13,15 " stroke="#fff" stroke-width="1.2"/></g>
<g transform="translate(877.5,69.5)"><path d="M3,1.6 Q10,0.4 13.6,4.6" fill="none" stroke="#2848a8" stroke-width="2.2"/><polygon points="2,3 15.6,10.6 8,16.6" fill="#e8d820" stroke="#b02020" stroke-width="1.8" stroke-linejoin="round"/><polygon points="5.6,7 11,10.4 8,13" fill="#6e6e6e"/><path d="M9,14 L16.4,16.4" stroke="#d8d070" stroke-width="1.6"/></g>
<g transform="translate(910.5,69.5)"><path d="M2,5 Q2,1.4 7,1.4 H10.4 Q13.4,1.4 13.4,5 V11 Q13.4,13.6 10.4,13.6 H5 Q2,13.6 2,11 Z" fill="#dcdcdc" stroke="#8a8a8a" stroke-width="0.8"/><circle cx="7" cy="6.6" r="3.6" fill="#e4d820" stroke="#6a6a10" stroke-width="0.8"/><path d="M8,12.6 L16.4,16.2 L17,14.6 L10,11.4" fill="#d8d070" stroke="#5a5a3a" stroke-width="0.7"/><path d="M0.8,9 L8,16.6 M8,9 L0.8,16.6" stroke="#c81820" stroke-width="2"/></g>
<g transform="translate(936,69.5)"><rect x="1" y="2.6" width="15.6" height="13.6" fill="none" stroke="#5aa02c" stroke-width="1.5"/><path d="M5,7 Q5,4.6 8,4.6 H9.4 Q11.4,4.6 11.4,7 V10.6 Q11.4,12.6 9.4,12.6 H7 Q5,12.6 5,10.6 Z" fill="#dcdcdc" stroke="#8a8a8a" stroke-width="0.6"/><circle cx="8" cy="8" r="2.4" fill="#e4d820"/><polygon points="9,1.2 17,9 9,16.8 1,9" fill="none" stroke="#c0281c" stroke-width="2.4" stroke-linejoin="round"/></g>
<g transform="translate(962.5,69.5)"><path d="M3,7 Q3,3.6 7,3.6 H9.4 Q12.4,3.6 12.4,7 V11 Q12.4,13.6 9.4,13.6 H6 Q3,13.6 3,11 Z" fill="#dcdcdc" stroke="#8a8a8a" stroke-width="0.6"/><circle cx="7.6" cy="8" r="2.8" fill="#e4d820" stroke="#6a6a10" stroke-width="0.6"/><polygon points="9,1.2 17,9 9,16.8 1,9" fill="none" stroke="#c0281c" stroke-width="2.4" stroke-linejoin="round"/><path d="M9,13 L16,16.4" stroke="#d8d070" stroke-width="1.6"/></g>
<g transform="translate(989,69.5)"><rect x="1" y="1.6" width="16" height="15" fill="#70883c" stroke="#5aa02c" stroke-width="1.6"/><path d="M3.6,6 Q3.6,3.4 7.6,3.4 H10 Q12.6,3.4 12.6,6 V11 Q12.6,13.4 10,13.4 H6.4 Q3.6,13.4 3.6,11 Z" fill="#dcdcdc" stroke="#8a8a8a" stroke-width="0.6"/><circle cx="7.6" cy="7.4" r="3" fill="#e4d820" stroke="#6a6a10" stroke-width="0.6"/><path d="M9,12.6 L16,15.6" stroke="#d8d070" stroke-width="1.6"/><rect x="12.6" y="4" width="3" height="7" fill="#e8e8e8"/></g>
</svg>
<!-- misc icons + 3D view content -->
<svg width="1024" height="545" viewBox="0 0 1024 545" style="z-index:4">
<defs>
<radialGradient id="pB" cx="0.4" cy="0.35" r="0.75"><stop offset="0" stop-color="#8fb8ec"/><stop offset="1" stop-color="#3565ac"/></radialGradient>
</defs>
<!-- app icon -->
<g id="fcicon" transform="translate(1.8,2.2)"><path d="M0,0.4 H5.8 V3 H2.9 V5 H5.2 V7.4 H2.9 V11.6 H0 Z" fill="#c8202c" stroke="#8c1018" stroke-width="0.5"/><circle cx="7.8" cy="7.6" r="3.1" fill="#456aa8" stroke="#2c4878" stroke-width="1.1" stroke-dasharray="1.3 0.9"/><circle cx="7.8" cy="7.6" r="1.1" fill="#e8eefa"/></g>
<!-- window controls -->
<path d="M933.2,7.6 H940.8" stroke="#222" stroke-width="0.9"/>
<path d="M967.4,5.8 H973.2 V10.8 H967.4 Z M969,5.8 V4 H974.8 V9 H973.2" fill="none" stroke="#222" stroke-width="0.9"/>
<path d="M1001.8,4 L1009.2,11.2 M1009.2,4 L1001.8,11.2" stroke="#222" stroke-width="0.9"/>
<!-- dock title buttons -->
<g fill="#4c4c4c"><path d="M235.4,100.6 h2.6 v1.2 h-1.3 v1.3 h-1.3 Z M244.4,100.6 h-2.6 v1.2 h1.3 v1.3 h1.3 Z M235.4,109.2 h2.6 v-1.2 h-1.3 v-1.3 h-1.3 Z M244.4,109.2 h-2.6 v-1.2 h1.3 v-1.3 h1.3 Z" stroke="#4c4c4c" stroke-width="0.8" stroke-linejoin="round"/></g>
<path d="M249.8,101.2 L256.8,108.4 M256.8,101.2 L249.8,108.4" stroke="#484848" stroke-width="1.8" fill="none"/>
<!-- tree icons -->
<path d="M9.4,177.6 L12.2,180.2 L15,177.6" fill="none" stroke="#8c8c8c" stroke-width="1.7"/>
<path d="M26.6,189.8 L28.8,192 L26.6,194.2" fill="none" stroke="#808080" stroke-width="1.6"/>
<path d="M26.6,203.2 L28.8,205.4 L26.6,207.6" fill="none" stroke="#808080" stroke-width="1.6"/>
<path d="M12.2,172 V176 M28,186 V189 M28,196 V202" stroke="#bdbdbd" stroke-width="0.8"/>
<g transform="translate(23.4,172.8)"><path d="M0.4,0.2 H7.4 L9.8,2.6 V11.4 H0.4 Z" fill="#f6f6f6" stroke="#c4c4c8" stroke-width="0.5"/><polygon points="1.6,5.4 5.6,4.4 8.4,5.2 8.4,9 4.6,10.4 1.6,9.4" fill="#2c4c88"/><polygon points="1.6,5.4 5.6,4.4 8.4,5.2 4.6,6.4" fill="#4a70b0"/><path d="M3.6,3.6 L6.4,1 L9,2.2 L8.6,4.6 L5.6,6 Z" fill="#c01c2c"/><path d="M3.6,3.6 L6.4,1 L9,2.2 L6.4,3.4 Z" fill="#e04050"/></g>
<g stroke="#2c4f8e" stroke-width="0.8"><circle cx="41.6" cy="193.4" r="3.6" fill="url(#pB)"/><circle cx="45.2" cy="190.8" r="3.6" fill="url(#pB)"/><path d="M39.2,190.8 L43,188 M44,196 L47.8,193.4" fill="none"/><circle cx="41.6" cy="206.8" r="3.6" fill="url(#pB)"/><circle cx="45.2" cy="204.2" r="3.6" fill="url(#pB)"/></g>
<path d="M39.4,191 L42.8,188.2 L47.6,190 L47.6,193.6 L44,196.4 L39.6,194.8Z" fill="#4f81c8" opacity="0.9"/>
<path d="M39.4,204.4 L42.8,201.6 L47.6,203.4 L47.6,207 L44,209.8 L39.6,208.2Z" fill="#4f81c8" opacity="0.9"/>
<!-- mdi tab icons -->
<g transform="translate(277,498.4) scale(1.02)"><path d="M0,0.4 H5.8 V3 H2.9 V5 H5.2 V7.4 H2.9 V11.6 H0 Z" fill="#c8202c" stroke="#8c1018" stroke-width="0.5"/><circle cx="7.8" cy="7.6" r="3.1" fill="#456aa8" stroke="#2c4878" stroke-width="1.1" stroke-dasharray="1.3 0.9"/><circle cx="7.8" cy="7.6" r="1.1" fill="#e8eefa"/></g>
<g transform="translate(370,498.4) scale(1.02)"><path d="M0,0.4 H5.8 V3 H2.9 V5 H5.2 V7.4 H2.9 V11.6 H0 Z" fill="#c8202c" stroke="#8c1018" stroke-width="0.5"/><circle cx="7.8" cy="7.6" r="3.1" fill="#456aa8" stroke="#2c4878" stroke-width="1.1" stroke-dasharray="1.3 0.9"/><circle cx="7.8" cy="7.6" r="1.1" fill="#e8eefa"/></g>
<g transform="translate(486,498.4) scale(1.02)"><path d="M0,0.4 H5.8 V3 H2.9 V5 H5.2 V7.4 H2.9 V11.6 H0 Z" fill="#c8202c" stroke="#8c1018" stroke-width="0.5"/><circle cx="7.8" cy="7.6" r="3.1" fill="#456aa8" stroke="#2c4878" stroke-width="1.1" stroke-dasharray="1.3 0.9"/><circle cx="7.8" cy="7.6" r="1.1" fill="#e8eefa"/></g>
<g stroke="#3c3c3c" stroke-width="1.4" fill="none"><path d="M352.2,501.6 L359.4,508.8 M359.4,501.6 L352.2,508.8"/><path d="M467.8,501.6 L475,508.8 M475,501.6 L467.8,508.8"/><path d="M552.4,501.6 L559.6,508.8 M559.6,501.6 L552.4,508.8"/></g>
<!-- status mouse icon -->
<rect x="866.4" y="527" width="6.8" height="9.6" rx="3" fill="none" stroke="#333" stroke-width="1.1"/><path d="M869.8,528.4 V531" stroke="#333" stroke-width="1"/>

<!-- ===== 3D scene ===== -->
<g id="pinReto" stroke="#15150f" stroke-width="0.95" stroke-linejoin="round">
<polygon points="645.4,206.3 657.3,205.3 652.5,209.4 649.8,216.3" fill="#45453c"/>
<polygon points="657.3,205.3 787.2,296.7 780.4,300.8 652.5,209.4" fill="#8c8c74"/>
<polygon points="652.5,209.4 780.4,300.8 779,308.9 649.8,216.3" fill="#707060"/>
<polygon points="787.2,296.7 790.5,307.7 780.4,300.8" fill="#9a9a84"/>
<polygon points="780.4,300.8 790.5,307.7 779,308.9" fill="#84846e"/>
</g>
<g id="blockReto">
<polygon points="693.5,208.3 715.5,223.2 712.4,240.4 700.7,255.5 687.6,264.5 665.3,250 670.4,227.3 677.3,219" fill="#161616"/>
<path d="M677.3,219 L699.5,234 L715.5,223.2 M699.5,234 C693,238 691,246 687.6,264.5" fill="none" stroke="#262626" stroke-width="1"/>
</g>
<g stroke="#15150f" stroke-width="0.95" stroke-linejoin="round">
<polygon points="700.6,236.6 787.2,296.7 780.4,300.8 697.0,242.8" fill="#8c8c74"/>
<polygon points="697.0,242.8 780.4,300.8 779,308.9 694.6,248.7" fill="#707060"/>
<polygon points="787.2,296.7 790.5,307.7 780.4,300.8" fill="#9a9a84"/>
<polygon points="780.4,300.8 790.5,307.7 779,308.9" fill="#84846e"/>
</g>
<path d="M700.6,236.6 C696,239 694.4,244 694.6,248.7" fill="none" stroke="#161616" stroke-width="2.4"/>

<!-- bent pin: shifted by (-78.7,52.8) -->
<g transform="translate(-78.7,52.8)">
<g stroke="#15150f" stroke-width="0.95" stroke-linejoin="round">
<polygon points="645.4,206.3 657.3,205.3 652.5,209.4 649.8,216.3" fill="#45453c"/>
<polygon points="657.3,205.3 729.2,255.9 722.4,260.0 652.5,209.4" fill="#8c8c74"/>
<polygon points="652.5,209.4 722.4,260.0 715,262.6 649.8,216.3" fill="#707060"/>
</g>
<polygon points="693.5,208.3 715.5,223.2 712.4,240.4 700.7,255.5 687.6,264.5 665.3,250 670.4,227.3 677.3,219" fill="#161616"/>
<path d="M677.3,219 L699.5,234 L715.5,223.2 M699.5,234 C693,238 691,246 687.6,264.5" fill="none" stroke="#262626" stroke-width="1"/>
<g stroke="#15150f" stroke-width="0.95" stroke-linejoin="round">
<polygon points="700.6,236.6 729.6,256.3 722.6,260.4 697.0,242.8" fill="#8c8c74"/>
<polygon points="697.0,242.8 722.6,260.4 714.8,262.8 694.6,248.7" fill="#707060"/>
</g>
<path d="M700.6,236.6 C696,239 694.4,244 694.6,248.7" fill="none" stroke="#161616" stroke-width="2.4"/>
</g>
<!-- bent part (absolute coords) -->
<g stroke="#15150f" stroke-width="0.95" stroke-linejoin="round">
<polygon points="635.9,315.4 643.7,312.8 634.0,383.6 623.4,380.2" fill="#8c8c74"/>
<polygon points="643.7,312.8 650.5,308.7 639.6,378.6 634.0,383.6" fill="#707060"/>
<polygon points="623.4,380.2 634.0,383.6 639.6,378.6 628.3,387.4" fill="#45453c"/>
<path d="M643.7,312.8 L644.6,306.0 M636.2,315.2 L644.6,306.0 L646.4,305.8" fill="none" stroke-width="0.5"/>
</g>

<!-- axis cross -->
<g fill="none" stroke-width="1.2"><path d="M1003.5,473.6 L1007,461.6" stroke="#2e8c2e"/><path d="M1003.5,473.6 L995.2,467.4" stroke="#1c1c2c"/><path d="M1003.5,473.6 L993.6,481.2" stroke="#301c1c"/><path d="M994.6,477 L999,481.6 M999,477.4 L994.4,481.4" stroke="#222" stroke-width="0.9"/></g>
<text x="1007.6" y="462.4" font-family="Liberation Sans, sans-serif" font-size="6.5" fill="#7c7c7c">Y</text>
<text x="996.6" y="466.6" font-family="Liberation Sans, sans-serif" font-size="6.5" fill="#444">Z</text>

<!-- navigation cube -->
<g fill="#e6e6e6">
<polygon points="961.6,100.4 966.4,107.4 956.8,107.4"/>
<polygon points="961.4,212 966.2,205.6 956.6,205.6" fill="#e4e4e4"/>
<polygon points="906.4,156.8 913,151.6 913,162" />
<polygon points="1017.6,156.8 1011,151.6 1011,162"/>
<path d="M923.6,123 Q931,111.4 945.4,107.6" fill="none" stroke="#e8e8e8" stroke-width="3.6"/>
<path d="M978,107.6 Q992.4,111.4 999.8,123" fill="none" stroke="#e8e8e8" stroke-width="3.6"/>
<polygon points="920.6,120.4 927.6,123.4 921.6,126.4"/><polygon points="1002.8,120.4 995.8,123.4 1001.8,126.4"/>
</g>
<g stroke="#d6dee8" stroke-width="0.6" stroke-linejoin="round">
<polygon points="961.8,123.6 993.4,145.8 962,155.4 931.4,137.6" fill="#f3f6fa"/>
<polygon points="931.4,137.6 962,155.4 959.6,190.4 931.2,170.2" fill="#eef2f7"/>
<polygon points="962,155.4 993.4,145.8 990.2,162.4 959.6,190.4" fill="#e7edf4"/>
<polygon points="961.6,127.6 987.6,145.6 962,152.4 938,138" fill="#f8fafd" stroke="none"/>
<polygon points="934.6,142.6 958.4,156.8 956.6,185 934.4,168.6" fill="#f1f5fa" stroke="none"/>
</g>
<text transform="translate(965.4,138.6) rotate(-35)" text-anchor="middle" font-family="Liberation Sans, sans-serif" font-size="10" fill="#111" y="3.4">Rear</text>
<text transform="translate(946,167.6) rotate(-76)" text-anchor="middle" font-family="Liberation Sans, sans-serif" font-size="9.5" font-style="italic" fill="#111" y="3.2">Right</text>
<text transform="translate(978.4,171.4) rotate(-43)" text-anchor="middle" font-family="Liberation Sans, sans-serif" font-size="3.6" fill="#222" y="1.2" textLength="27" lengthAdjust="spacingAndGlyphs">Bottom</text>
<path d="M960.7,197.2 L986.5,172" stroke="#d04848" stroke-width="0.9" fill="none"/>
<path d="M986.5,172 Q990,165 992,157 L1000,140.4" stroke="#58c058" stroke-width="0.9" fill="none"/>
<text x="961" y="204" font-family="Liberation Sans, sans-serif" font-size="7" fill="#d04848">X</text>
<text x="1005.4" y="138.4" font-family="Liberation Sans, sans-serif" font-size="6.5" fill="#68c868">Y</text>
<!-- mini cube + menu arrow -->
<g stroke="#a8a8a8" stroke-width="0.5" stroke-linejoin="round"><polygon points="981,195.6 989.6,191.8 998.2,194.6 990,198.6" fill="#f4f4f4"/><polygon points="981,195.6 990,198.6 990,208.4 981.6,204.8" fill="#c6c6c6"/><polygon points="990,198.6 998.2,194.6 997.8,204.6 990,208.4" fill="#dedede"/></g>
<polygon points="1001.8,197.4 1011.8,197.4 1006.8,202.4" fill="#2c2c2c"/>
</svg>
</body></html>
